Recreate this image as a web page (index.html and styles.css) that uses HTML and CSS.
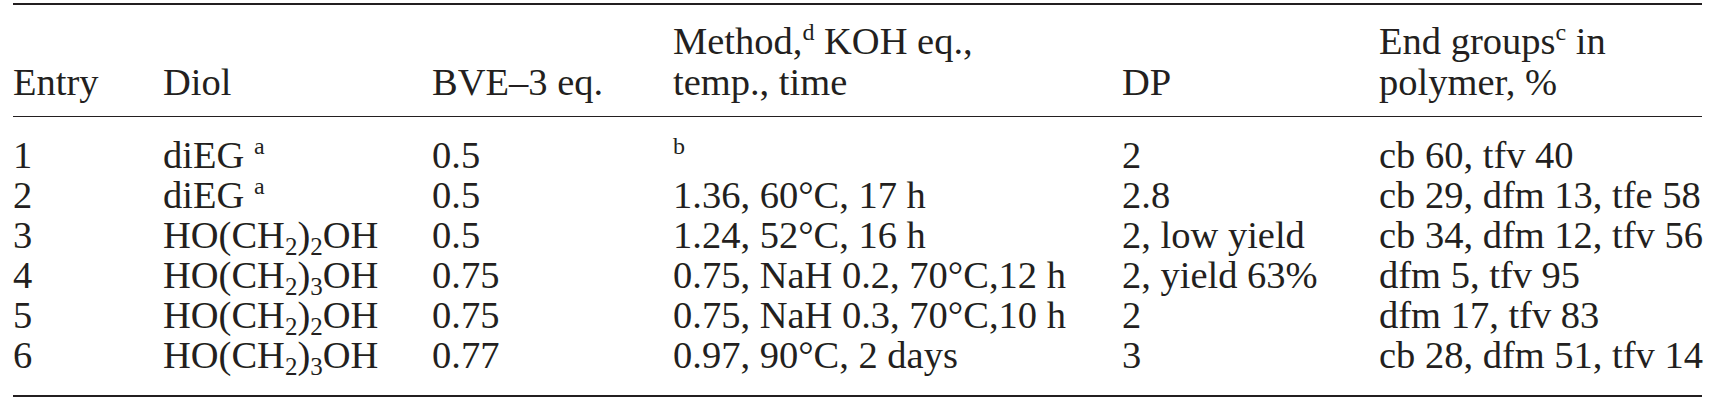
FILE: index.html
```html
<!DOCTYPE html>
<html lang="en">
<head>
  <meta charset="UTF-8">
  <title>Table – diol reactions with BVE-3</title>
  <link rel="stylesheet" href="styles.css">
</head>
<body>

  <table class="data-table">
    <colgroup>
      <col class="c-entry">
      <col class="c-diol">
      <col class="c-bve">
      <col class="c-method">
      <col class="c-dp">
      <col class="c-end">
    </colgroup>
    <thead>
      <tr>
        <th>Entry</th>
        <th>Diol</th>
        <th>BVE–3 eq.</th>
        <th>Method,<sup>d</sup> KOH eq.,<br>temp., time</th>
        <th>DP</th>
        <th>End groups<sup>c</sup> in<br>polymer, %</th>
      </tr>
    </thead>
    <tbody>
      <tr>
        <td>1</td>
        <td>diEG <sup>a</sup></td>
        <td>0.5</td>
        <td><sup>b</sup></td>
        <td>2</td>
        <td>cb 60, tfv 40</td>
      </tr>
      <tr>
        <td>2</td>
        <td>diEG <sup>a</sup></td>
        <td>0.5</td>
        <td>1.36, 60°C, 17 h</td>
        <td>2.8</td>
        <td>cb 29, dfm 13, tfe 58</td>
      </tr>
      <tr>
        <td>3</td>
        <td>HO(CH<sub>2</sub>)<sub>2</sub>OH</td>
        <td>0.5</td>
        <td>1.24, 52°C, 16 h</td>
        <td>2, low yield</td>
        <td>cb 34, dfm 12, tfv 56</td>
      </tr>
      <tr>
        <td>4</td>
        <td>HO(CH<sub>2</sub>)<sub>3</sub>OH</td>
        <td>0.75</td>
        <td>0.75, NaH 0.2, 70°C,12 h</td>
        <td>2, yield 63%</td>
        <td>dfm 5, tfv 95</td>
      </tr>
      <tr>
        <td>5</td>
        <td>HO(CH<sub>2</sub>)<sub>2</sub>OH</td>
        <td>0.75</td>
        <td>0.75, NaH 0.3, 70°C,10 h</td>
        <td>2</td>
        <td>dfm 17, tfv 83</td>
      </tr>
      <tr>
        <td>6</td>
        <td>HO(CH<sub>2</sub>)<sub>3</sub>OH</td>
        <td>0.77</td>
        <td>0.97, 90°C, 2 days</td>
        <td>3</td>
        <td>cb 28, dfm 51, tfv 14</td>
      </tr>
    </tbody>
  </table>

</body>
</html>
```

FILE: styles.css
```css
body {
  margin: 0;
  padding: 0;
  background-color: #ffffff;
  color: #231f20;
  font-family: "Liberation Serif", "Times New Roman", serif;
}

.data-table {
  margin: 3px 0 0 13px;
  width: 1689px;
  table-layout: fixed;
  border-collapse: collapse;
  font-size: 38.5px;
  border-top: 2px solid #231f20;
  border-bottom: 2px solid #231f20;
}

/* column widths taken from the printed table */
.c-entry { width: 150px; }
.c-diol { width: 269px; }
.c-bve { width: 241px; }
.c-method { width: 449px; }
.c-dp { width: 257px; }
.c-end { width: 323px; }

.data-table th,
.data-table td {
  padding: 0;
  text-align: left;
  white-space: nowrap;
}

.data-table th {
  font-weight: normal;
  line-height: 41px;
  vertical-align: bottom;
  padding-top: 16px;
  padding-bottom: 13px;
  border-bottom: 1px solid #231f20;
}

.data-table td {
  line-height: 40px;
}

.data-table tbody tr:first-child td {
  padding-top: 18px;
}

.data-table tbody tr:last-child td {
  padding-bottom: 20px;
}

sup {
  font-size: 24px;
  line-height: 0;
  vertical-align: 14px;
}

sub {
  font-size: 25px;
  line-height: 0;
  vertical-align: -7px;
}
```
